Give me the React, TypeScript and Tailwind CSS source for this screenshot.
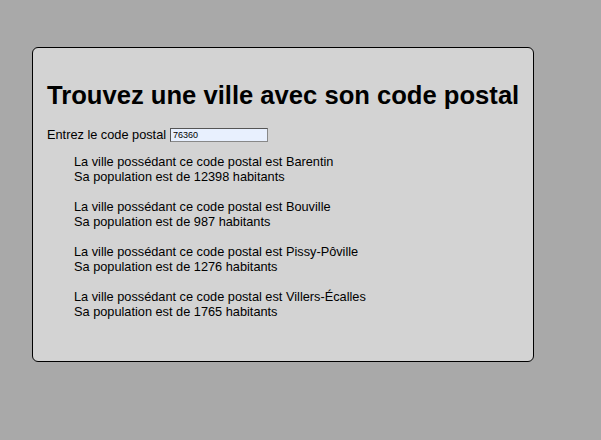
const villes = [
  { nom: "Barentin", population: 12398 },
  { nom: "Bouville", population: 987 },
  { nom: "Pissy-Pôville", population: 1276 },
  { nom: "Villers-Écalles", population: 1765 },
];

export default function App() {
  return (
    <div
      className="min-h-[440px] bg-[#a9a9a9] pt-[47px] pl-[32px] text-black"
      style={{ fontFamily: '"Liberation Sans", Arial, sans-serif' }}
    >
      <div className="w-[502px] h-[315px] rounded-[6px] border border-black bg-[#d3d3d3] px-[14px] pt-[32px]">
        <h1 className="text-[25.6px] font-bold leading-[30px] mb-[17px] whitespace-nowrap">
          Trouvez une ville avec son code postal
        </h1>
        <div className="flex items-center text-[12.75px] leading-[15px]">
          <label htmlFor="cp">Entrez le code postal</label>
          <input
            id="cp"
            defaultValue="76360"
            className="ml-[4px] w-[98px] h-[14px] border border-t-[#555] border-l-[#555] border-r-[#888] border-b-[#888] bg-[#e8f0fe] px-[2px] text-[9px] leading-none text-black outline-none"
          />
        </div>
        <ul className="mt-[12px] pl-[27px] text-[12.75px] leading-[15px]">
          {villes.map((v) => (
            <li key={v.nom} className="mb-[15px]">
              <div>La ville possédant ce code postal est {v.nom}</div>
              <div>Sa population est de {v.population} habitants</div>
            </li>
          ))}
        </ul>
      </div>
    </div>
  );
}
